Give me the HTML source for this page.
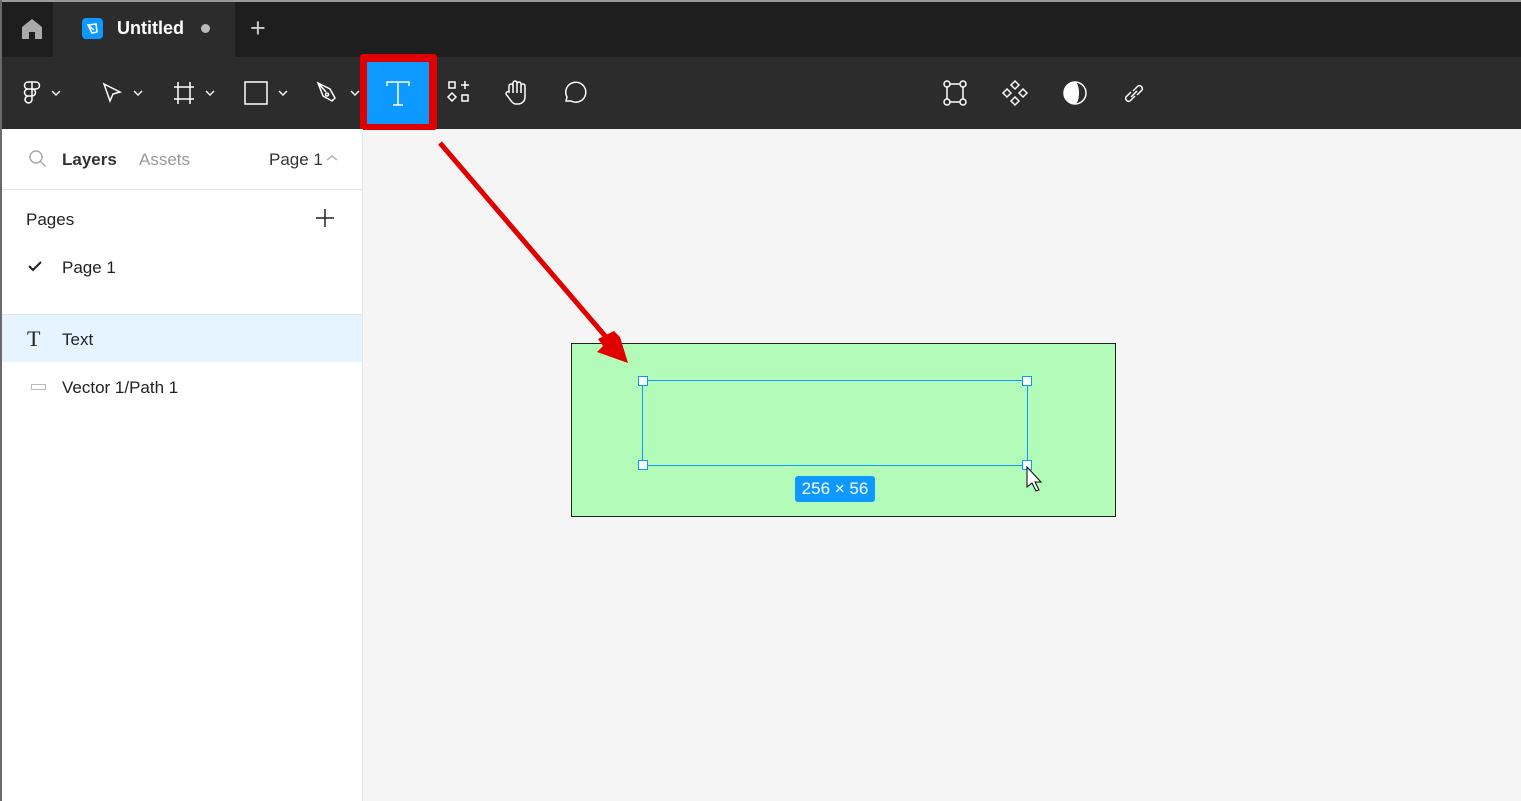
<!DOCTYPE html>
<html><head><style>
*{margin:0;padding:0;box-sizing:border-box}
body{width:1521px;height:801px;overflow:hidden;background:#f5f5f5;font-family:"Liberation Sans",sans-serif;position:relative}
.a{position:absolute}
</style></head><body>
<div class="a" style="left:0;top:0;width:1521px;height:57px;background:#1e1e1e"></div>
<div class="a" style="left:0;top:0;width:1521px;height:2px;background:#9a9a9a"></div>
<div class="a" style="left:0;top:0;width:2px;height:801px;background:#6a6a6a;z-index:5"></div>
<div class="a" style="left:53px;top:2px;width:182px;height:55px;background:#2c2c2c"></div>
<svg class="a" style="left:20px;top:17px" width="24" height="24" viewBox="0 0 24 24"><path d="M2 10L12 2L22 10V22H15V15H9V22H2Z" fill="#aaa"/></svg>
<div class="a" style="left:82px;top:18px;width:21px;height:21px;border-radius:4px;background:#0d99ff"></div>
<svg class="a" style="left:82px;top:18px" width="21" height="21" viewBox="0 0 21 21"><path d="M6 7L14 6L15 14L10 15Z M6 7L12 12" stroke="#fff" stroke-width="1.5" fill="none"/></svg>
<div class="a" style="left:117px;top:18px;color:#fff;font-size:18px;font-weight:bold">Untitled</div>
<div class="a" style="left:201px;top:24px;width:9px;height:9px;border-radius:50%;background:#bbb"></div>
<div class="a" style="left:250px;top:13px;color:#ccc;font-size:27px">+</div>
<div class="a" style="left:2px;top:57px;width:1519px;height:72px;background:#2c2c2c"></div>
<svg class="a" style="left:0;top:57px" width="620" height="72" viewBox="0 57 620 72" fill="none" stroke="#fff" stroke-width="1.5">
<path d="M28 82h8a3.5 3.5 0 0 1 0 7h-8a3.5 3.5 0 0 1 0-7zM28 89h4v7h-4a3.5 3.5 0 0 1 0-7zM32 89a3.5 3.5 0 1 1 0 7M28 96h4v3a3.5 3.5 0 1 1-4-3M32 82v7"/>
<path d="M52 91l4 4 4-4M134 91l4 4 4-4M206 91l4 4 4-4M279 91l4 4 4-4M351 91l4 4 4-4"/>
<path d="M104 84l16 8-7 2-3 7z"/>
<path d="M178 82v22M190 82v22M174 87h20M174 99h20"/>
<rect x="245" y="82" width="22" height="22"/>
<path d="M318 83l12 6 5 9-3 3-9-5zM318 83l8 9M327 93a1.5 1.5 0 1 0 0.1 0"/>
<rect x="449" y="82" width="6" height="6"/><path d="M465 81v8M461 85h8M452 93l4 4-4 4-4-4zM462 95h6v6h-6z"/>
<path d="M509 92v-6a2 2 0 0 1 4 0v-3a2 2 0 0 1 4 0v1a2 2 0 0 1 4 0v2a2 2 0 0 1 4 0v11c0 4-3 7-7 7h-2c-3 0-5-3-7-6l-3-4a2 2 0 0 1 3-2z M513 84v9M517 84v9M521 86v7"/>
<path d="M566 101l1-4a10 10 0 1 1 4 4z"/>
</svg>
<div class="a" style="left:360px;top:54px;width:77px;height:76px;background:#e00000;border-radius:3px"></div>
<div class="a" style="left:367px;top:62px;width:62px;height:62px;background:#0d99ff"></div>
<svg class="a" style="left:367px;top:62px" width="62" height="62" viewBox="0 0 62 62" fill="none" stroke="#fff" stroke-width="1.5"><path d="M20 24v-4h22v4M31 20v23M26 43h10"/></svg>
<svg class="a" style="left:930px;top:70px" width="230" height="48" viewBox="930 70 230 48" fill="none" stroke="#fff" stroke-width="1.5">
<path d="M947 84v18M963 84v18M947 84h16M947 102h16" /><circle cx="947" cy="84" r="3" fill="#2c2c2c"/><circle cx="963" cy="84" r="3" fill="#2c2c2c"/><circle cx="947" cy="102" r="3" fill="#2c2c2c"/><circle cx="963" cy="102" r="3" fill="#2c2c2c"/>
<path d="M1015 81l4 4-4 4-4-4zM1015 97l4 4-4 4-4-4zM1007 89l4 4-4 4-4-4zM1023 89l4 4-4 4-4-4z"/>
<circle cx="1075" cy="93" r="11"/><path d="M1075 82A11 11 0 0 0 1075 104A4 11 0 0 0 1075 82z" fill="#fff" stroke="none"/>
<path d="M1131 92l-5 5a3 3 0 0 0 4 4l5-5M1137 95l5-5a3 3 0 0 0-4-4l-5 5M1131 97l6-6"/>
</svg>
<div class="a" style="left:2px;top:129px;width:361px;height:672px;background:#fff;border-right:1px solid #e6e6e6"></div>
<svg class="a" style="left:28px;top:149px" width="20" height="20" viewBox="0 0 20 20" fill="none" stroke="#aaa" stroke-width="1.5"><circle cx="8" cy="8" r="6"/><path d="M12.5 12.5l5 5"/></svg>
<div class="a" style="left:62px;top:150px;font-size:17px;font-weight:bold;color:#333">Layers</div>
<div class="a" style="left:139px;top:150px;font-size:17px;color:#999">Assets</div>
<div class="a" style="left:269px;top:150px;font-size:17px;color:#333">Page 1</div>
<svg class="a" style="left:326px;top:154px" width="12" height="8"><path d="M1 6l5-4 5 4" stroke="#aaa" stroke-width="1.3" fill="none"/></svg>
<div class="a" style="left:2px;top:189px;width:360px;height:1px;background:#e5e5e5"></div>
<div class="a" style="left:26px;top:210px;font-size:17px;color:#222">Pages</div>
<svg class="a" style="left:316px;top:209px" width="18" height="18"><path d="M9 0v18M0 9h18" stroke="#222" stroke-width="1.5"/></svg>
<svg class="a" style="left:28px;top:260px" width="14" height="12"><path d="M1 6l4 4 8-8" stroke="#222" stroke-width="2" fill="none"/></svg>
<div class="a" style="left:62px;top:258px;font-size:17px;color:#222">Page 1</div>
<div class="a" style="left:2px;top:314px;width:360px;height:1px;background:#e5e5e5"></div>
<div class="a" style="left:2px;top:315px;width:360px;height:47px;background:#e5f4ff"></div>
<div class="a" style="left:27px;top:326px;font-size:22px;font-family:'Liberation Serif',serif;color:#222">T</div>
<div class="a" style="left:62px;top:330px;font-size:17px;color:#222">Text</div>
<div class="a" style="left:31px;top:384px;width:15px;height:6px;border:1.5px solid #bbb"></div>
<div class="a" style="left:62px;top:378px;font-size:17px;color:#222">Vector 1/Path 1</div>
<div class="a" style="left:571px;top:343px;width:545px;height:174px;background:#b3fbb9;border:1.5px solid #222"></div>
<div class="a" style="left:642px;top:380px;width:386px;height:86px;border:1.5px solid #0d99ff"></div>
<div class="a" style="left:638px;top:376px;width:10px;height:10px;border:1.5px solid #0d99ff;background:#fff"></div>
<div class="a" style="left:1022px;top:376px;width:10px;height:10px;border:1.5px solid #0d99ff;background:#fff"></div>
<div class="a" style="left:638px;top:460px;width:10px;height:10px;border:1.5px solid #0d99ff;background:#fff"></div>
<div class="a" style="left:1022px;top:460px;width:10px;height:10px;border:1.5px solid #0d99ff;background:#fff"></div>
<div class="a" style="left:795px;top:476px;width:80px;height:26px;background:#0d99ff;border-radius:3px;color:#fff;font-size:17px;text-align:center;line-height:26px">256 × 56</div>
<svg class="a" style="left:1026px;top:466px" width="20" height="30"><path d="M1 1v20l5-4 4 8 3-1-4-8h6z" fill="#fff" stroke="#000" stroke-width="1"/></svg>
<svg class="a" style="left:0;top:0" width="1521" height="801"><path d="M440 143L606 337" stroke="#e00000" stroke-width="5"/><path d="M628 363L597 352L603 346L598 339L614 331L620 337Z" fill="#e00000"/></svg>
</body></html>
